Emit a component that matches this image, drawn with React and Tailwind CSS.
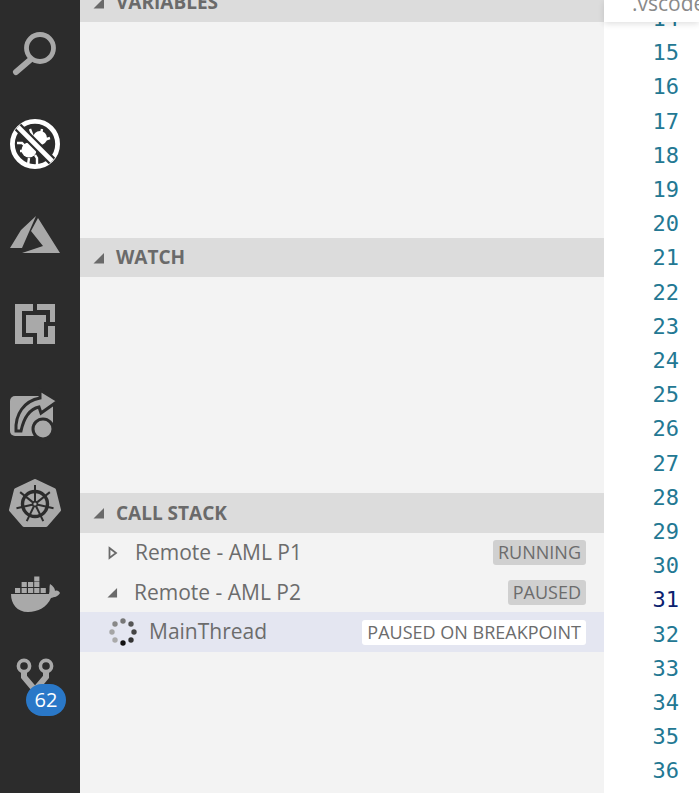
import React from 'react';

const GRAY = '#a9a9a9';
const BAR = '#2c2c2c';

function Cell({ top, children }) {
  return (
    <div className="relative h-[90px] w-20">
      <svg width="80" height="90" viewBox={`0 ${top} 80 90`} className="block">
        {children}
      </svg>
    </div>
  );
}

function Bug() {
  return (
    <g>
      <circle cx="35" cy="144" r="22.6" fill="none" stroke="#fff" strokeWidth="4.8" />
      <circle cx="29" cy="150" r="7.5" fill="#fff" />
      <circle cx="40" cy="138" r="7" fill="#fff" />
      <path d="M30 129 L33 137 M42 129 L41 134 M50 138 L44 140 M17 143 H22 L25 146 M20 151 H22 M28 165 L29 158 M37 165 V158 L35 155 M48 153 L42 151" stroke="#fff" strokeWidth="2.4" fill="none" />
      <path d="M18 127 L52 161" stroke={BAR} strokeWidth="9" />
      <path d="M18 127 L52 161" stroke="#fff" strokeWidth="4.6" />
    </g>
  );
}

function Wheel() {
  const cx = 35;
  const cy = 504;
  const spokes = [0, 1, 2, 3, 4, 5, 6].map((i) => {
    const a = (i * 2 * Math.PI) / 7 - Math.PI / 2;
    return [cx + 3 * Math.cos(a), cy + 3 * Math.sin(a), cx + 19 * Math.cos(a), cy + 19 * Math.sin(a)];
  });
  return (
    <g>
      <path d="M35 481 L54 490 L59 510 L46 525 L24 525 L11 510 L16 490 Z" fill={GRAY} stroke={GRAY} strokeWidth="4" strokeLinejoin="round" />
      <circle cx={cx} cy={cy} r="12.5" fill="none" stroke={BAR} strokeWidth="3.4" />
      <circle cx={cx} cy={cy} r="2.4" fill="none" stroke={BAR} strokeWidth="1.6" />
      {spokes.map((s, i) => (
        <line key={i} x1={s[0]} y1={s[1]} x2={s[2]} y2={s[3]} stroke={BAR} strokeWidth="2" />
      ))}
    </g>
  );
}

function Docker() {
  const boxes = [
    [15, 588], [21.6, 588], [28, 588], [34.2, 588], [40.6, 588],
    [21.6, 582], [28, 582], [34.2, 582],
    [34.2, 576.5],
  ];
  return (
    <g fill={GRAY}>
      {boxes.map((b, i) => (
        <rect key={i} x={b[0]} y={b[1]} width="5.2" height="5" />
      ))}
      <path d="M11 594 H49 C50 591 49 587 50 584 C53 586 55 588 55 591 C57 590 59 591 60 593 C58 597 54 597 51 598 C47 607 38 612 28 612 C17 612 11 604 11 594 Z" />
    </g>
  );
}

function Spinner() {
  const dots = [
    [123, 621, '#777777'], [131, 624, '#555555'], [134, 632, '#444444'], [131, 640, '#333333'],
    [123, 643, '#111111'], [115, 640, '#aaaaaa'], [112, 632, '#a5a5a5'], [115, 624, '#888888'],
  ];
  return (
    <svg width="30" height="30" viewBox="108 617 30 30" className="absolute left-[28px] top-[5px]">
      {dots.map((d, i) => (
        <circle key={i} cx={d[0]} cy={d[1]} r="2.7" fill={d[2]} />
      ))}
    </svg>
  );
}

function Caret({ className }) {
  return (
    <svg width="12" height="12" viewBox="0 0 12 12" className={className}>
      <path d="M0.5 11.5 H11 V1 Z" fill="#6a6a6a" />
    </svg>
  );
}

function Header({ title, className }) {
  return (
    <div className={`flex h-[39px] items-center bg-[#dcdcdc] pl-[13px] ${className || ''}`}>
      <Caret />
      <span className="ml-[11px] text-[19px] font-bold text-[#6a6a6a]">{title}</span>
    </div>
  );
}

function Row({ label, status, open, bg }) {
  return (
    <div className="flex h-[39.5px] items-center justify-between pr-[18px]">
      <div className="flex items-center pl-[27px]">
        {open ? (
          <Caret className="h-[11px] w-[11px]" />
        ) : (
          <svg width="12" height="14" viewBox="0 0 12 14">
            <path d="M2.5 2 L9 7 L2.5 12 Z" fill="none" stroke="#6a6a6a" strokeWidth="1.8" />
          </svg>
        )}
        <span className="ml-[16px] text-[21px] text-[#6c6c6c]">{label}</span>
      </div>
      <span className={`flex h-[25px] items-center rounded-[3px] px-[5px] text-[18px] text-[#6c6c6c] ${bg}`}>{status}</span>
    </div>
  );
}

const LINES = [14, 15, 16, 17, 18, 19, 20, 21, 22, 23, 24, 25, 26, 27, 28, 29, 30, 31, 32, 33, 34, 35, 36];

export default function App() {
  return (
    <div className="flex h-[793px] w-[699px] overflow-hidden bg-white font-['Open_Sans',sans-serif]">
      <div className="relative w-20 shrink-0 bg-[#2c2c2c] pt-2">
        <Cell top={8}>
          <circle cx="40" cy="48" r="13.5" fill="none" stroke={GRAY} strokeWidth="4.8" />
          <path d="M30 60 L16 72" stroke={GRAY} strokeWidth="6" strokeLinecap="round" />
        </Cell>
        <Cell top={98}>
          <Bug />
        </Cell>
        <Cell top={188}>
          <path d="M36 216 L21 230 L10 248 L22 248 Z M38 218 L31 231 L43 246 L22 253 L60 253 Z" fill={GRAY} />
        </Cell>
        <Cell top={278}>
          <rect x="15" y="304" width="40" height="40" fill={GRAY} />
          <path d="M33 304 H37 V311 H33 Z M33 337 H37 V344 H33 Z M22 311 H37 V315 H26 V333 H48 V326 H55 V322 H44 V315 H46 V322 H50 V310 H37 V337 H22 Z" fill={BAR} fillRule="evenodd" />
          <rect x="26" y="315" width="18" height="18" fill={GRAY} />
          <rect x="44" y="326" width="4" height="11" fill={BAR} />
        </Cell>
        <Cell top={368}>
          <rect x="10" y="396" width="43" height="40" rx="5" fill={GRAY} />
          <path d="M21 431 L16 431 C15 414 24 401 40 398 L40 390 L58 401 L41 413 L39 407 C30 409 24 417 21 431 Z" fill={GRAY} stroke={BAR} strokeWidth="3" />
          <circle cx="43" cy="429" r="11.5" fill={BAR} />
          <circle cx="43" cy="429" r="8.5" fill={GRAY} />
        </Cell>
        <Cell top={458}>
          <Wheel />
        </Cell>
        <Cell top={548}>
          <Docker />
        </Cell>
        <Cell top={638}>
          <circle cx="24" cy="666" r="5.6" fill="none" stroke={GRAY} strokeWidth="3.6" />
          <circle cx="46" cy="666" r="5.6" fill="none" stroke={GRAY} strokeWidth="3.6" />
          <path d="M24 672 V677 L35 690 L46 677 V672" fill="none" stroke={GRAY} strokeWidth="6" />
        </Cell>
        <div className="absolute left-[26px] top-[684px] flex h-8 w-10 items-center justify-center rounded-full bg-[#2a78c8] text-[20px] text-white">
          62
        </div>
      </div>

      <div className="w-[524px] shrink-0 bg-[#f3f3f3]">
        <Header title="VARIABLES" className="-mt-[17px]" />
        <div className="h-[216px]" />
        <Header title="WATCH" />
        <div className="h-[216px]" />
        <Header title="CALL STACK" className="h-[40px]" />
        <Row label="Remote - AML P1" status="RUNNING" bg="bg-[#d0d0d0]" />
        <Row label="Remote - AML P2" status="PAUSED" bg="bg-[#d0d0d0]" open />
        <div className="relative flex h-10 items-center justify-between bg-[#e4e6f1] pr-[18px]">
          <Spinner />
          <span className="ml-[69px] text-[21px] text-[#6c6c6c]">MainThread</span>
          <span className="flex h-[25px] items-center rounded-[3px] bg-white px-[5px] text-[18px] text-[#6c6c6c]">PAUSED ON BREAKPOINT</span>
        </div>
      </div>

      <div className="min-w-0 flex-1 bg-white">
        <div className="relative z-10 h-[22px] overflow-hidden bg-white pl-[28px] shadow-[0_2px_6px_rgba(0,0,0,0.12)]">
          <span className="-mt-[12px] block whitespace-nowrap text-[21px] leading-[30px] text-[#8a8a8a]">.vscode</span>
        </div>
        <div className="-mt-[20px] pr-5 text-right font-['DejaVu_Sans_Mono',monospace] text-[22px] leading-[34.2px] text-[#237893]">
          {LINES.map((n) => (
            <div key={n} className={n === 31 ? 'text-[#0b216f]' : ''}>
              {n}
            </div>
          ))}
        </div>
      </div>
    </div>
  );
}
